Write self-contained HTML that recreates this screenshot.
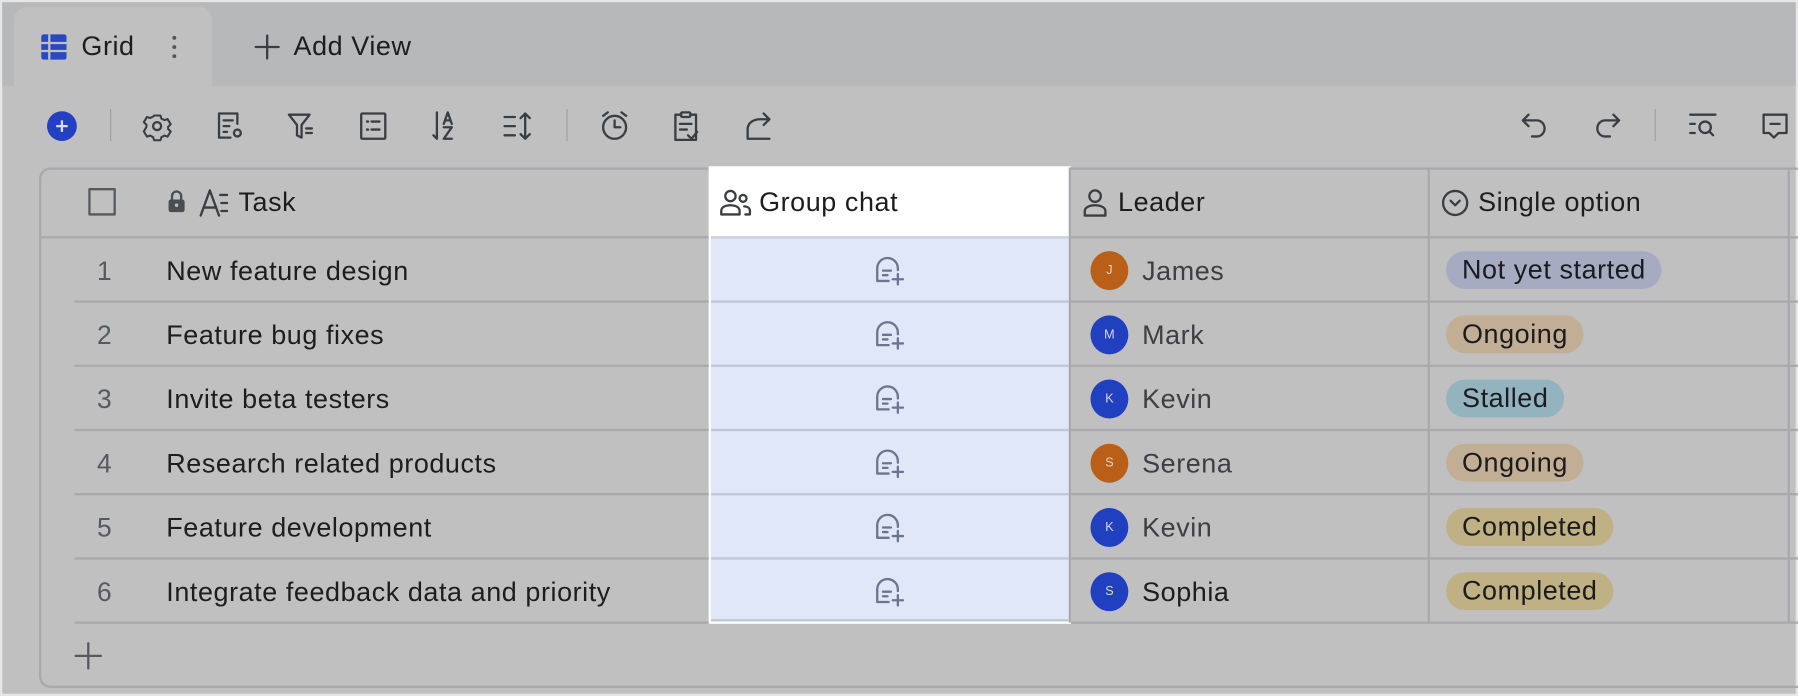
<!DOCTYPE html>
<html><head><meta charset="utf-8"><style>
html,body{margin:0;padding:0;width:1798px;height:696px;overflow:hidden;background:#e6e6e6;}
#w{position:absolute;left:0;top:0;width:1568px;height:607px;transform:scale(1.14668);transform-origin:0 0;font-family:"Liberation Sans",sans-serif;color:#1c1d1f;}
.a{position:absolute;}
#bg{left:2px;top:2px;width:1564px;height:603px;background:#c0c0c0;}
#tabbar{left:2px;top:2px;width:1564px;height:73px;background:#b7b8ba;}
#tab{left:12px;top:6px;width:173px;height:70px;background:#c0c0c0;border-radius:12px 12px 0 0;}
.t22{font-size:23.5px;letter-spacing:0.5px;}
svg{position:absolute;overflow:visible}
.ic{fill:none;stroke:#3a3d42;stroke-width:2;stroke-linecap:round;stroke-linejoin:round}
#table{left:34px;top:146px;width:1540px;height:454px;border:2px solid #a9a9ad;border-right:none;border-radius:10px 0 0 10px;box-sizing:border-box;}
.hl{height:2px;background:#a9a9ad;}
.vl{width:2px;background:#a9a9ad;}
.num{color:#555a60;font-size:23px;width:40px;text-align:center;}
.pill{position:absolute;height:33px;line-height:33px;border-radius:17px;padding:0 14px;font-size:23.5px;letter-spacing:0.5px;color:#1a1b1d;}
.av{position:absolute;width:33px;height:34px;border-radius:50%;color:#d8d8d8;font-size:11px;text-align:center;line-height:34px;}
.or{background:#b95f17;} .bl{background:#2140c0;}
</style></head><body><div id="w">
<div class="a" id="bg"></div>
<div class="a" id="tabbar"></div>
<div class="a" id="tab"></div>
<svg style="left:35px;top:29px" width="24" height="24"><rect x="1" y="1" width="22" height="22" rx="2" fill="#2848c4"/><g stroke="#c0c0c0" stroke-width="2"><line x1="8" y1="1" x2="8" y2="23"/><line x1="1" y1="8.5" x2="23" y2="8.5"/><line x1="1" y1="15.5" x2="23" y2="15.5"/></g></svg>
<div class="a t22" style="left:71px;top:27px">Grid</div>
<svg style="left:150px;top:31px" width="4" height="20"><circle cx="2" cy="2" r="1.7" fill="#555"/><circle cx="2" cy="10" r="1.7" fill="#555"/><circle cx="2" cy="18" r="1.7" fill="#555"/></svg>
<svg style="left:222px;top:30px" width="22" height="22" class="ic"><path d="M11 1V21M1 11H21"/></svg>
<div class="a t22" style="left:256px;top:27px">Add View</div>

<svg style="left:41px;top:97px" width="26" height="26"><circle cx="13" cy="13" r="13" fill="#2440c2"/><path d="M13 8V18M8 13H18" stroke="#ddd" stroke-width="2"/></svg>
<div class="a" style="left:96px;top:95px;height:28px;width:1px;background:#a0a0a0"></div>
<svg style="left:125px;top:98px" width="24" height="24" class="ic"><path d="M9 2h6l1 3 3 1.5 3-1 3 5-2.5 2.5v2l2.5 2.5-3 5-3-1-3 1.5-1 3H9l-1-3-3-1.5-3 1-3-5L1.5 13v-2L-1 8.5l3-5 3 1L8 3z" transform="scale(0.9) translate(1.5,1)"/><circle cx="12" cy="12" r="3.5"/></svg>
<svg style="left:188px;top:97px" width="26" height="26" class="ic"><path d="M13 23H3V2H19V11M7 8H15M7 13H12M7 18H10"/><circle cx="19" cy="19" r="3"/></svg>
<svg style="left:250px;top:97px" width="26" height="26" class="ic"><path d="M2 3H20L13 12V23L9 21V12Z"/><path d="M17 15H22M17 19H22"/></svg>
<svg style="left:313px;top:97px" width="26" height="26" class="ic"><rect x="2" y="2" width="21" height="22" rx="1"/><path d="M7 9H8M11 9H18M7 16H8M11 16H18"/></svg>
<svg style="left:377px;top:96px" width="26" height="28" class="ic"><path d="M4 2V25M1 22L4 25"/><path d="M10 12L13.5 2 17 12M11 9H16M10 15H17L10 25H17"/></svg>
<svg style="left:438px;top:97px" width="28" height="26" class="ic"><path d="M2 5H11M2 13H11M2 21H11M20 2V24M16 6L20 2 24 6M16 20L20 24 24 20"/></svg>
<div class="a" style="left:494px;top:95px;height:28px;width:1px;background:#a0a0a0"></div>
<svg style="left:522px;top:96px" width="28" height="28" class="ic"><circle cx="14" cy="15" r="10"/><path d="M14 9V15H19M4 5L8 2M24 5L20 2"/></svg>
<svg style="left:586px;top:96px" width="26" height="28" class="ic"><path d="M8 4H3V26H21V4H16"/><rect x="8" y="2" width="8" height="4" rx="1"/><path d="M7 12H17M7 17H13M14 22L17 25 22 19"/></svg>
<svg style="left:649px;top:97px" width="26" height="26" class="ic"><path d="M3 24H22M3 24V16C3 10 8 7 14 7H22M17 2L22 7 17 12"/></svg>
<svg style="left:1325px;top:97px" width="26" height="26" class="ic"><path d="M8 3L3 8 8 13M3 8H15C19 8 22 11 22 15S19 22 15 22H11"/></svg>
<svg style="left:1389px;top:97px" width="26" height="26" class="ic"><path d="M18 3L23 8 18 13M23 8H11C7 8 4 11 4 15S7 22 11 22H15"/></svg>
<div class="a" style="left:1443px;top:95px;height:28px;width:1px;background:#a0a0a0"></div>
<svg style="left:1471px;top:97px" width="28" height="26" class="ic"><path d="M3 3H25M3 11H7M3 19H7"/><circle cx="16" cy="14" r="5"/><path d="M20 18L23 21"/></svg>
<svg style="left:1535px;top:97px" width="26" height="26" class="ic"><path d="M3 3H23V19H16L12 23 8 19H3Z M9 11H17"/></svg>

<div class="a" id="table"></div>
<div class="a" style="left:618px;top:145px;width:316px;height:399px;background:#fff;"></div>
<div class="a" style="left:620px;top:208px;width:312px;height:334px;background:#dfe7f8;"></div>
<div class="a hl" style="left:35px;top:206px;width:583px"></div>
<div class="a hl" style="left:620px;top:206px;width:312px;background:#c9cfdc"></div>
<div class="a hl" style="left:934px;top:206px;width:634px"></div>
<div class="a vl" style="left:932px;top:146px;height:397px"></div>
<div class="a vl" style="left:1245px;top:146px;height:397px"></div>
<div class="a vl" style="left:1559px;top:146px;height:397px"></div>

<div class="a" style="left:77px;top:164px;width:20px;height:20px;border:2px solid #555a60;border-radius:1px"></div>
<svg style="left:146px;top:166px" width="16" height="20"><path d="M4 8V5a4 4 0 0 1 8 0V8" fill="none" stroke="#4a4d52" stroke-width="2"/><rect x="1" y="8" width="14" height="11" rx="2" fill="#4a4d52"/><circle cx="8" cy="13" r="1.5" fill="#c0c0c0"/></svg>
<svg style="left:174px;top:165px" width="30" height="24" class="ic"><path d="M1 23L9 1 17 23M4 16H14M18 5H24M19 12H24M19 19H24"/></svg>
<div class="a t22" style="left:208px;top:163px">Task</div>
<svg style="left:628px;top:165px" width="28" height="24" class="ic"><circle cx="9" cy="6" r="4.5"/><path d="M1 22V19c0-3 3-5 8-5s8 2 8 5v3Z"/><circle cx="20" cy="8" r="3"/><path d="M21 15c3 0 5 1.5 5 4v3h-4"/></svg>
<div class="a t22" style="left:662px;top:163px">Group chat</div>
<svg style="left:945px;top:165px" width="20" height="24" class="ic"><circle cx="10" cy="6" r="5"/><path d="M1 23V19c0-3 4-5 9-5s9 2 9 5v4Z"/></svg>
<div class="a t22" style="left:975px;top:163px">Leader</div>
<svg style="left:1257px;top:165px" width="24" height="24" class="ic"><circle cx="12" cy="12" r="10.5"/><path d="M8 10L12 14 16 10"/></svg>
<div class="a t22" style="left:1289px;top:163px">Single option</div>

<div class="a num" style="left:71px;top:223px">1</div><div class="a t22" style="left:145px;top:223px">New feature design</div>
<div class="a num" style="left:71px;top:279px">2</div><div class="a t22" style="left:145px;top:279px">Feature bug fixes</div>
<div class="a num" style="left:71px;top:335px">3</div><div class="a t22" style="left:145px;top:335px">Invite beta testers</div>
<div class="a num" style="left:71px;top:391px">4</div><div class="a t22" style="left:145px;top:391px">Research related products</div>
<div class="a num" style="left:71px;top:447px">5</div><div class="a t22" style="left:145px;top:447px">Feature development</div>
<div class="a num" style="left:71px;top:503px">6</div><div class="a t22" style="left:145px;top:503px">Integrate feedback data and priority</div>

<div class="a hl" style="left:65px;top:262px;width:553px"></div><div class="a hl" style="left:620px;top:262px;width:312px;background:#bfc6d6"></div><div class="a hl" style="left:934px;top:262px;width:634px"></div>
<div class="a hl" style="left:65px;top:318px;width:553px"></div><div class="a hl" style="left:620px;top:318px;width:312px;background:#bfc6d6"></div><div class="a hl" style="left:934px;top:318px;width:634px"></div>
<div class="a hl" style="left:65px;top:374px;width:553px"></div><div class="a hl" style="left:620px;top:374px;width:312px;background:#bfc6d6"></div><div class="a hl" style="left:934px;top:374px;width:634px"></div>
<div class="a hl" style="left:65px;top:430px;width:553px"></div><div class="a hl" style="left:620px;top:430px;width:312px;background:#bfc6d6"></div><div class="a hl" style="left:934px;top:430px;width:634px"></div>
<div class="a hl" style="left:65px;top:486px;width:553px"></div><div class="a hl" style="left:620px;top:486px;width:312px;background:#bfc6d6"></div><div class="a hl" style="left:934px;top:486px;width:634px"></div>
<div class="a hl" style="left:65px;top:542px;width:553px"></div><div class="a hl" style="left:620px;top:540px;width:312px;background:#bfc6d6"></div><div class="a hl" style="left:934px;top:542px;width:634px"></div>

<svg style="left:763px;top:224px" width="28" height="26"><path d="M2 21V10a9 9 0 0 1 18 0v1.5M2 21H12M7 12H14M7 16H11M20 15V24M15.5 19.5H24.5" fill="none" stroke="#6b7590" stroke-width="2" stroke-linecap="round"/></svg>
<svg style="left:763px;top:280px" width="28" height="26"><path d="M2 21V10a9 9 0 0 1 18 0v1.5M2 21H12M7 12H14M7 16H11M20 15V24M15.5 19.5H24.5" fill="none" stroke="#6b7590" stroke-width="2" stroke-linecap="round"/></svg>
<svg style="left:763px;top:336px" width="28" height="26"><path d="M2 21V10a9 9 0 0 1 18 0v1.5M2 21H12M7 12H14M7 16H11M20 15V24M15.5 19.5H24.5" fill="none" stroke="#6b7590" stroke-width="2" stroke-linecap="round"/></svg>
<svg style="left:763px;top:392px" width="28" height="26"><path d="M2 21V10a9 9 0 0 1 18 0v1.5M2 21H12M7 12H14M7 16H11M20 15V24M15.5 19.5H24.5" fill="none" stroke="#6b7590" stroke-width="2" stroke-linecap="round"/></svg>
<svg style="left:763px;top:448px" width="28" height="26"><path d="M2 21V10a9 9 0 0 1 18 0v1.5M2 21H12M7 12H14M7 16H11M20 15V24M15.5 19.5H24.5" fill="none" stroke="#6b7590" stroke-width="2" stroke-linecap="round"/></svg>
<svg style="left:763px;top:504px" width="28" height="26"><path d="M2 21V10a9 9 0 0 1 18 0v1.5M2 21H12M7 12H14M7 16H11M20 15V24M15.5 19.5H24.5" fill="none" stroke="#6b7590" stroke-width="2" stroke-linecap="round"/></svg>

<div class="av or" style="left:951px;top:219px">J</div><div class="a t22" style="left:996px;top:223px;color:#3c3f44">James</div>
<div class="av bl" style="left:951px;top:275px">M</div><div class="a t22" style="left:996px;top:279px;color:#3c3f44">Mark</div>
<div class="av bl" style="left:951px;top:331px">K</div><div class="a t22" style="left:996px;top:335px;color:#3c3f44">Kevin</div>
<div class="av or" style="left:951px;top:387px">S</div><div class="a t22" style="left:996px;top:391px;color:#3c3f44">Serena</div>
<div class="av bl" style="left:951px;top:443px">K</div><div class="a t22" style="left:996px;top:447px;color:#3c3f44">Kevin</div>
<div class="av bl" style="left:951px;top:499px">S</div><div class="a t22" style="left:996px;top:503px;color:#1c1d1f">Sophia</div>

<div class="pill" style="left:1261px;top:219px;background:#a6abc2">Not yet started</div>
<div class="pill" style="left:1261px;top:275px;background:#c2ad95">Ongoing</div>
<div class="pill" style="left:1261px;top:331px;background:#93b3bf">Stalled</div>
<div class="pill" style="left:1261px;top:387px;background:#c2ad95">Ongoing</div>
<div class="pill" style="left:1261px;top:443px;background:#bfb184">Completed</div>
<div class="pill" style="left:1261px;top:499px;background:#bfb184">Completed</div>

<svg style="left:65px;top:560px" width="24" height="24" class="ic"><path d="M12 1V23M1 12H23" stroke="#555a60"/></svg>
</div></body></html>
